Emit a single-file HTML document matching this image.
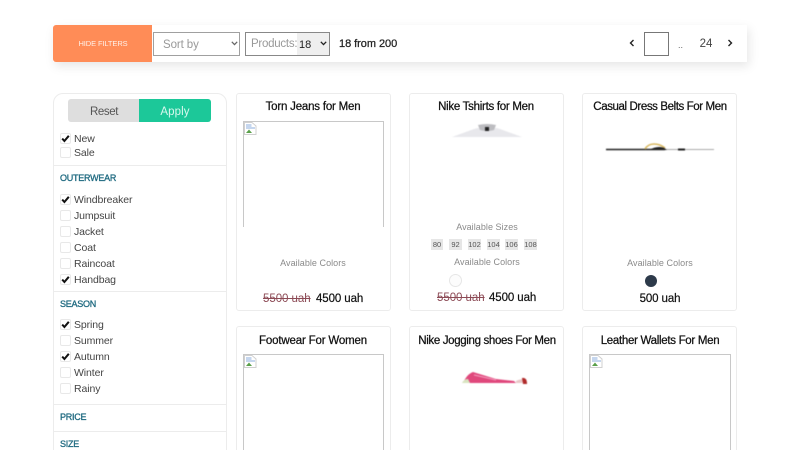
<!DOCTYPE html>
<html><head><meta charset="utf-8"><style>
html,body{margin:0;padding:0;background:#fff}
html{height:450px;overflow:hidden}
#w{width:800px;height:450px;overflow:hidden;position:relative;font-family:"Liberation Sans",sans-serif;color:#222;background:#fff}
.a{position:absolute}
.t{position:absolute;white-space:nowrap;line-height:14px;height:14px}
.c{transform:translateX(-50%)}
.lb{font-size:10.5px;letter-spacing:-.1px;color:#444;left:74px;margin-top:1px}
.cb{position:absolute;left:60px;width:9px;height:9px;border:1px solid #e8e8e8;border-radius:2px;background:#fff}
.cb svg{position:absolute;left:0;top:0}
.h{font-size:9px;color:#1f6a80;left:60px;letter-spacing:-.25px;-webkit-text-stroke:.3px #1f6a80;margin-top:0}
.d{position:absolute;left:54px;width:172px;height:1px;background:#ececec}
.card{position:absolute;width:153px;background:#fff;border:1px solid #ececec;border-radius:3px;box-sizing:content-box}
.ti{font-size:11.5px;color:#111;-webkit-text-stroke:.25px #111}
.av{font-size:9px;letter-spacing:.05px;color:#8a8a8a}
.pr{font-size:11.5px;letter-spacing:-.1px;color:#111;-webkit-text-stroke:.2px #111}
.old{font-size:11.5px;letter-spacing:-.05px;color:#8c4a55;text-decoration:line-through}
.ch{position:absolute;top:239px;height:11px;background:#e6e6e6;font-size:7.5px;line-height:11px;text-align:center;color:#555}
.img{position:absolute;border:1px solid #c8c8c8;border-bottom:0;box-sizing:border-box}
.img svg{position:absolute;left:0;top:0}
.bl{filter:blur(.4px)}
</style></head><body><div id="w">

<div class="a" style="left:53px;top:25px;width:694px;height:37px;background:#fff;box-shadow:2px 4px 10px rgba(0,0,0,.1)"></div>
<div class="a" style="left:53px;top:25px;width:99px;height:37px;background:#ff8c57;border-radius:3px 0 0 3px"></div>
<div class="t c" style="left:103px;top:37px;font-size:7.5px;color:#fff0e8;letter-spacing:-.1px">HIDE FILTERS</div>

<div class="a" style="left:153px;top:32px;width:87px;height:24px;border:1px solid #a0a0a0;box-sizing:border-box"></div>
<div class="t" style="left:163px;top:38px;font-size:11.5px;color:#999;letter-spacing:-.1px">Sort by</div>
<svg class="a" style="left:231px;top:41px" width="7" height="5"><path d="M.8.8 3.5 3.6 6.2.8" fill="none" stroke="#666" stroke-width="1.2"/></svg>

<div class="a" style="left:245px;top:32px;width:85px;height:24px;border:1px solid #888;box-sizing:border-box"></div>
<div class="a" style="left:297px;top:33px;width:32px;height:22px;background:#efefef"></div>
<div class="t" style="left:251px;top:37px;font-size:11.5px;color:#999;letter-spacing:-.25px">Products:</div>
<div class="t" style="left:299px;top:38px;font-size:11px;color:#222">18</div>
<svg class="a" style="left:320px;top:41px" width="7" height="5"><path d="M.8.8 3.5 3.6 6.2.8" fill="none" stroke="#222" stroke-width="1.3"/></svg>
<div class="t" style="left:339px;top:37px;font-size:11px;color:#222;letter-spacing:-.05px;-webkit-text-stroke:.25px #222">18 from 200</div>

<svg class="a" style="left:629px;top:39px" width="6" height="8"><path d="M4.5 1 1.5 4 4.5 7" fill="none" stroke="#222" stroke-width="1.4"/></svg>
<div class="a" style="left:644px;top:32px;width:25px;height:24px;border:1px solid #777;box-sizing:border-box;background:#fff"></div>
<div class="t" style="left:678px;top:38px;font-size:9px;color:#666">..</div>
<div class="t c" style="left:706px;top:37px;font-size:11.5px;color:#444;letter-spacing:0">24</div>
<svg class="a" style="left:727px;top:39px" width="6" height="8"><path d="M1.5 1 4.5 4 1.5 7" fill="none" stroke="#222" stroke-width="1.4"/></svg>

<!-- Sidebar -->
<div class="a" style="left:53px;top:93px;width:174px;height:370px;border:1px solid #ececec;border-radius:10px;box-sizing:border-box"></div>
<div class="a" style="left:68px;top:99px;width:71px;height:23px;background:#dedede;border-radius:3px 0 0 3px"></div>
<div class="a" style="left:139px;top:99px;width:72px;height:23px;background:#1cc899;border-radius:0 3px 3px 0"></div>
<div class="t c" style="left:104px;top:105px;font-size:11.5px;color:#555;letter-spacing:-.4px">Reset</div>
<div class="t c" style="left:175px;top:105px;font-size:11.5px;color:#d8f8ee;letter-spacing:.1px">Apply</div>

<div class="cb" style="top:133px"><svg width="9" height="9"><path d="M1.2 4.6 3.4 7 7.8 1.8" fill="none" stroke="#111" stroke-width="2"/></svg></div>
<div class="t lb" style="top:131px">New</div>
<div class="cb" style="top:147px"></div>
<div class="t lb" style="top:145px">Sale</div>
<div class="d" style="top:165px"></div>
<div class="t h" style="top:171px">OUTERWEAR</div>

<div class="cb" style="top:194px"><svg width="9" height="9"><path d="M1.2 4.6 3.4 7 7.8 1.8" fill="none" stroke="#111" stroke-width="2"/></svg></div>
<div class="t lb" style="top:192px">Windbreaker</div>
<div class="cb" style="top:210px"></div>
<div class="t lb" style="top:208px">Jumpsuit</div>
<div class="cb" style="top:226px"></div>
<div class="t lb" style="top:224px">Jacket</div>
<div class="cb" style="top:242px"></div>
<div class="t lb" style="top:240px">Coat</div>
<div class="cb" style="top:258px"></div>
<div class="t lb" style="top:256px">Raincoat</div>
<div class="cb" style="top:274px"><svg width="9" height="9"><path d="M1.2 4.6 3.4 7 7.8 1.8" fill="none" stroke="#111" stroke-width="2"/></svg></div>
<div class="t lb" style="top:272px">Handbag</div>
<div class="d" style="top:291px"></div>
<div class="t h" style="top:297px">SEASON</div>

<div class="cb" style="top:319px"><svg width="9" height="9"><path d="M1.2 4.6 3.4 7 7.8 1.8" fill="none" stroke="#111" stroke-width="2"/></svg></div>
<div class="t lb" style="top:317px">Spring</div>
<div class="cb" style="top:335px"></div>
<div class="t lb" style="top:333px">Summer</div>
<div class="cb" style="top:351px"><svg width="9" height="9"><path d="M1.2 4.6 3.4 7 7.8 1.8" fill="none" stroke="#111" stroke-width="2"/></svg></div>
<div class="t lb" style="top:349px">Autumn</div>
<div class="cb" style="top:367px"></div>
<div class="t lb" style="top:365px">Winter</div>
<div class="cb" style="top:383px"></div>
<div class="t lb" style="top:381px">Rainy</div>
<div class="d" style="top:404px"></div>
<div class="t h" style="top:410px">PRICE</div>
<div class="d" style="top:431px"></div>
<div class="t h" style="top:437px">SIZE</div>

<!-- Row 1 -->
<div class="card" style="left:236px;top:93px;height:216px"></div>
<div class="card" style="left:409px;top:93px;height:216px"></div>
<div class="card" style="left:582px;top:93px;height:216px"></div>
<div class="t c ti" style="left:313px;top:100px;letter-spacing:-.2px">Torn Jeans for Men</div>
<div class="t c ti" style="left:486px;top:100px;letter-spacing:-.28px">Nike Tshirts for Men</div>
<div class="t c ti" style="left:660px;top:100px;letter-spacing:-.4px">Casual Dress Belts For Men</div>

<div class="img" style="left:243px;top:121px;width:141px;height:106px">
<svg width="14" height="14"><path d="M.5.5H8L12 4V12.5H.5Z" fill="#fff" stroke="#d0d0d0"/><path d="M2 2H7.5V5H11V7H2Z" fill="#c5d6ee"/><path d="M2 11 5 7.5 8 11Z" fill="#5aa04a"/></svg></div>

<div class="t c av" style="left:313px;top:256px">Available Colors</div>
<div class="t old" style="left:263px;top:292px">5500 uah</div>
<div class="t pr" style="left:316px;top:292px">4500 uah</div>

<svg class="a bl" style="left:450px;top:122px" width="74" height="16">
<path d="M2 15 L24 7 Q37 3 50 7 L72 15 Z" fill="#e8e8ec"/>
<path d="M28 3 Q37 1 46 3 L44 8 Q37 10 30 8 Z" fill="#bcbcc0"/>
<rect x="35" y="5" width="4" height="4" fill="#222"/>
</svg>
<div class="t c av" style="left:487px;top:220px">Available Sizes</div>
<div class="ch" style="left:431px;width:12px">80</div>
<div class="ch" style="left:449px;width:13px">92</div>
<div class="ch" style="left:468px;width:13px">102</div>
<div class="ch" style="left:487px;width:13px">104</div>
<div class="ch" style="left:505px;width:13px">106</div>
<div class="ch" style="left:524px;width:13px">108</div>
<div class="t c av" style="left:487px;top:255px">Available Colors</div>
<div class="a" style="left:449px;top:274px;width:13px;height:13px;border:1px solid #e6e6e6;border-radius:50%;box-sizing:border-box;background:#fcfcfc"></div>
<div class="t old" style="left:437px;top:291px">5500 uah</div>
<div class="t pr" style="left:489px;top:291px">4500 uah</div>

<svg class="a bl" style="left:605px;top:141px" width="110" height="12">
<path d="M1 8.5H60" stroke="#222" stroke-width="1.4"/>
<path d="M60 8.5H109" stroke="#aaa" stroke-width="1"/>
<path d="M73 8.5H80" stroke="#222" stroke-width="2"/>
<path d="M40 8 Q43 3 49 3 Q55 3 60 7" fill="none" stroke="#d8b860" stroke-width="1.6"/>
<path d="M44 9 Q50 5.5 55 6 Q59 6 62 9Z" fill="#222"/>
</svg>
<div class="t c av" style="left:660px;top:256px">Available Colors</div>
<div class="a" style="left:645px;top:275px;width:12px;height:12px;border-radius:50%;background:#2d3a4a"></div>
<div class="t c pr" style="left:660px;top:292px">500 uah</div>

<!-- Row 2 -->
<div class="card" style="left:236px;top:326px;height:140px"></div>
<div class="card" style="left:409px;top:326px;height:140px"></div>
<div class="card" style="left:582px;top:326px;height:140px"></div>
<div class="t c ti" style="left:313px;top:334px;letter-spacing:-.17px">Footwear For Women</div>
<div class="t c ti" style="left:487px;top:334px;letter-spacing:-.34px">Nike Jogging shoes For Men</div>
<div class="t c ti" style="left:660px;top:334px;letter-spacing:-.3px">Leather Wallets For Men</div>

<div class="img" style="left:243px;top:354px;width:141px;height:110px">
<svg width="14" height="14"><path d="M.5.5H8L12 4V12.5H.5Z" fill="#fff" stroke="#d0d0d0"/><path d="M2 2H7.5V5H11V7H2Z" fill="#c5d6ee"/><path d="M2 11 5 7.5 8 11Z" fill="#5aa04a"/></svg></div>
<div class="img" style="left:589px;top:354px;width:142px;height:110px">
<svg width="14" height="14"><path d="M.5.5H8L12 4V12.5H.5Z" fill="#fff" stroke="#d0d0d0"/><path d="M2 2H7.5V5H11V7H2Z" fill="#c5d6ee"/><path d="M2 11 5 7.5 8 11Z" fill="#5aa04a"/></svg></div>

<svg class="a bl" style="left:460px;top:370px" width="70" height="14">
<path d="M3 13 Q7 4 13 2 L36 9 L54 11 L56 13Z" fill="#e0487c"/>
<path d="M14 5 L36 10" stroke="#f4a0c0" stroke-width="1"/>
<path d="M2 13 Q4 9 8 9 L10 13Z" fill="#d8e4c0"/>
<path d="M56 11 Q60 9 64 9 L62 13 H56Z" fill="#e8c8c8"/>
<path d="M62 8 Q67 7 67 14 H63Z" fill="#b02a2a"/>
</svg>
</div></body></html>
